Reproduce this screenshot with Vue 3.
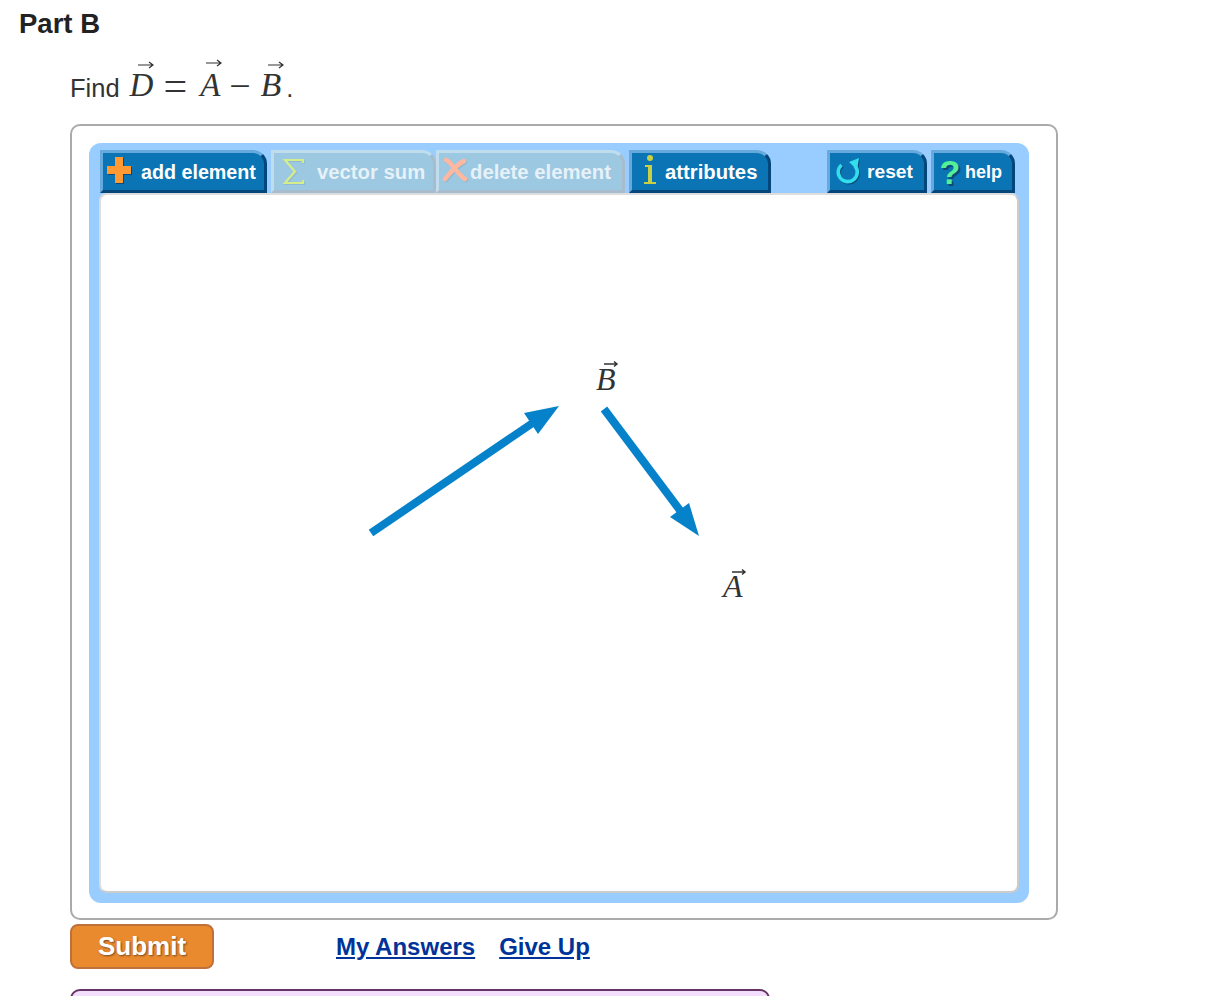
<script setup>
const arrows = [
  { line: [371, 533, 540, 418], head: '559,406 524,413 538,434' },
  { line: [604, 409, 685, 517], head: '699,536 689,503 670,517' }
]
</script>

<template>
  <div class="page">
    <h2 class="part">Part B</h2>
    <div class="body">
      <p class="question">
        <span class="find">Find</span>
        <span class="vec d">D<svg class="over" viewBox="0 0 16 8"><path d="M0 4H15M11 1l4 3-4 3" /></svg></span>
        <span class="op eq">=</span>
        <span class="vec a">A<svg class="over" viewBox="0 0 16 8"><path d="M0 4H15M11 1l4 3-4 3" /></svg></span>
        <span class="op minus">−</span>
        <span class="vec b">B<svg class="over" viewBox="0 0 16 8"><path d="M0 4H15M11 1l4 3-4 3" /></svg></span>
        <span class="dot">.</span>
      </p>

      <div class="card">
        <div class="panel">
          <div class="toolbar">
            <button class="tab add">
              <svg class="icon lit" width="28" height="28" viewBox="0 0 28 28">
                <path class="plus" d="M9 0h8v9h8v8h-8v9H9v-9H1V9h8z" />
              </svg>
              add element
            </button>
            <button class="tab off sum">
              <svg class="icon dim" width="24" height="28" viewBox="0 0 24 28">
                <path class="sigma" d="M21 5V2H3l10 11.5L3 25h18v-3" />
              </svg>
              vector sum
            </button>
            <button class="tab off del">
              <svg class="icon dim" width="26" height="26" viewBox="0 0 26 26">
                <path class="cross" d="M4 3c5 1 11 14 19 19M22 4C16 6 10 14 3 22" />
              </svg>
              delete element
            </button>
            <button class="tab attr">
              <svg class="icon" width="14" height="32" viewBox="0 0 14 32">
                <circle class="ifill" cx="7" cy="4" r="3" />
                <path class="ifill" d="M5 11h4v17h4v2H1v-2h4V13H2v-2z" />
              </svg>
              attributes
            </button>
            <span class="spacer"></span>
            <button class="tab reset">
              <svg class="icon lit" width="28" height="28" viewBox="0 0 28 28">
                <path class="reset-arc" d="M7.5 8a9.5 9.5 0 1 0 13.5 1" />
                <path class="reset-head" d="M15 5l10-4-2 12z" />
              </svg>
              reset
            </button>
            <button class="tab help">
              <span class="q">?</span>
              help
            </button>
          </div>
          <div class="canvas">
            <svg class="board" viewBox="101 195 916 696">
              <g v-for="(a, i) in arrows" :key="i">
                <line class="shaft" :x1="a.line[0]" :y1="a.line[1]" :x2="a.line[2]" :y2="a.line[3]" />
                <polygon class="head" :points="a.head" />
              </g>
              <text class="label" x="596" y="390">B</text>
              <path class="label-arrow" d="M604 364H617M614 361.5l3 2.5-3 2.5" />
              <text class="label" x="723" y="597">A</text>
              <path class="label-arrow" d="M732 572H745M742 569.5l3 2.5-3 2.5" />
            </svg>
          </div>
        </div>
      </div>

      <div class="actions">
        <button class="submit">Submit</button>
        <a class="link first" href="#">My Answers</a>
        <a class="link" href="#">Give Up</a>
      </div>

      <div class="note"></div>
    </div>
  </div>
</template>

<style>
html, body { margin: 0; background: #fff; }
</style>

<style scoped>
.page {
  height: 996px;
  overflow: hidden;
  font-family: "Liberation Sans", Arial, sans-serif;
  color: #222;
}
.part {
  margin: 0;
  padding-left: 19px;
  height: 48px;
  font-size: 27.5px;
  line-height: 48px;
  font-weight: 700;
}
.body { margin-left: 70px; width: 988px; }
.question {
  margin: 0;
  height: 76px;
  padding-top: 17px;
  box-sizing: border-box;
  font-size: 25.5px;
  line-height: 40px;
  color: #333;
  white-space: nowrap;
}
.find { margin-right: 10px; }
.vec {
  display: inline-block;
  position: relative;
  vertical-align: 1px;
  font-family: "Liberation Serif", serif;
  font-style: italic;
  font-size: 33px;
  line-height: 40px;
}
.over {
  position: absolute;
  left: 8px;
  top: -4px;
  width: 16px;
  height: 8px;
  fill: none;
  stroke: #333;
  stroke-width: 1.2;
}
.a .over { left: 6px; top: -6px; }
.b .over { left: 7px; }
.op {
  font-family: "Liberation Serif", serif;
  line-height: 30px;
}
.eq { margin-left: 10px; font-size: 42px; vertical-align: -3px; }
.a { width: 22px; margin-left: 13px; }
.minus { margin-left: 7px; font-size: 38px; vertical-align: -2px; }
.b { margin-left: 10px; font-size: 34px; }
.dot { margin-left: 5px; }

.card {
  box-sizing: border-box;
  height: 796px;
  padding: 17px 27px 15px 17px;
  border: 2px solid #aaa;
  border-radius: 10px;
}
.panel {
  box-sizing: border-box;
  height: 760px;
  padding: 7px 10px 10px;
  background: #9cf;
  border-radius: 12px;
}
.toolbar { display: flex; height: 43px; margin: 0 4px 0 1px; }
.spacer { flex: 1; }
.tab {
  display: flex;
  align-items: center;
  box-sizing: border-box;
  height: 43px;
  margin: 0 4px 0 0;
  padding: 1px 0 0;
  border: 3px solid #0a74b4;
  border-top-color: #66aadd;
  border-left-color: #66aadd;
  border-right-color: #04457a;
  border-bottom-color: #04457a;
  border-top-right-radius: 14px;
  background: #0a74b4;
  color: #fff;
  font: 700 20.3px "Liberation Sans", Arial, sans-serif;
  white-space: nowrap;
}
.off {
  border-top-color: #bfdded;
  border-left-color: #bfdded;
  border-right-color: #a8bccb;
  border-bottom-color: #a8bccb;
  background: #9cc8e2;
  color: #e6f1f8;
}
.lit { filter: drop-shadow(1.5px 1.5px 0 #0b4a78); }
.dim { filter: drop-shadow(1px 1px 0 #8fb8d2); }
.add { width: 167px; font-size: 19.7px; }
.add .icon { margin: 0 7px 2px 3px; }
.sum { width: 165px; margin-right: 0; }
.sum .icon { margin: 0 11px 0 8px; }
.del { width: 189px; }
.del .icon { margin: 0 2px 4px 3px; }
.attr { width: 142px; }
.attr .icon { margin: 0 8px 4px 11px; }
.reset { width: 100px; font-size: 19.2px; }
.reset .icon { margin: 0 5px 2px 4px; }
.help { width: 84px; margin-right: 0; font-size: 18px; }
.q {
  width: 30px;
  margin-left: 1px;
  text-align: center;
  color: #55ee99;
  font-size: 34px;
  line-height: 34px;
  text-shadow: 2px 2px 0 #0b4a78;
}
.plus { fill: #f93; }
.sigma { fill: none; stroke: #d4ee8c; stroke-width: 2.2; }
.cross { fill: none; stroke: #ffb8a0; stroke-width: 4.5; stroke-linecap: round; }
.ifill { fill: #c8d044; }
.reset-arc { fill: none; stroke: #3de; stroke-width: 3.6; }
.reset-head { fill: #3de; }

.canvas {
  box-sizing: border-box;
  height: 700px;
  background: #fff;
  border: 2px solid #ccc;
  border-top-color: #ddd;
  border-left-color: #ddd;
  border-radius: 8px;
  overflow: hidden;
}
.board { display: block; width: 916px; height: 696px; }
.shaft { stroke: #0582ca; stroke-width: 8; }
.head { fill: #0582ca; }
.label {
  font-family: "Liberation Serif", serif;
  font-style: italic;
  font-size: 32px;
  fill: #333;
}
.label-arrow { fill: none; stroke: #333; stroke-width: 1.5; }

.actions {
  display: flex;
  align-items: center;
  height: 45px;
  margin-top: 4px;
}
.submit {
  box-sizing: border-box;
  width: 144px;
  height: 45px;
  padding: 0;
  border: 2px solid #c0703a;
  border-radius: 8px;
  background: #ea8a2f;
  color: #fff;
  font: 700 26px "Liberation Sans", Arial, sans-serif;
  text-shadow: 1px 1px 2px #7a4a20;
}
.link {
  margin-left: 24px;
  color: #039;
  font-size: 24px;
  font-weight: 700;
  text-underline-offset: 2px;
}
.first { margin-left: 122px; }
.note {
  box-sizing: border-box;
  width: 700px;
  height: 40px;
  margin-top: 20px;
  background: #f3dffd;
  border: 2px solid #636;
  border-radius: 10px;
}
</style>
